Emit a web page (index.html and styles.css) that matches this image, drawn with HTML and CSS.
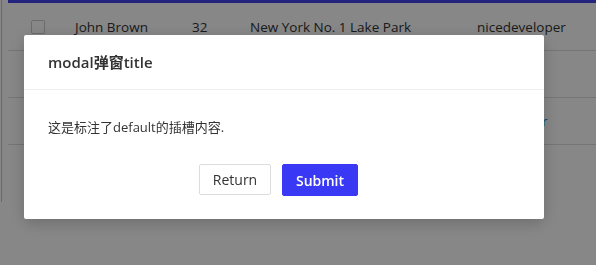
FILE: index.html
```html
<!DOCTYPE html>
<html>

<head>
    <meta charset="UTF-8">
    <title>modal</title>
    <link rel="stylesheet" href="styles.css">
</head>

<body>
    <div class="page">
        <div class="list">
            <div class="row">
                <div class="cell c-check"><span class="checkbox"></span></div>
                <div class="cell c-name">John Brown</div>
                <div class="cell c-age">32</div>
                <div class="cell c-addr">New York No. 1 Lake Park</div>
                <div class="cell c-tag">nicedeveloper</div>
            </div>
            <div class="row">
                <div class="cell c-check"><span class="checkbox"></span></div>
                <div class="cell c-name">Jim Green</div>
                <div class="cell c-age">42</div>
                <div class="cell c-addr">London No. 1 Lake Park</div>
                <div class="cell c-tag">loser</div>
            </div>
            <div class="row">
                <div class="cell c-check"><span class="checkbox"></span></div>
                <div class="cell c-name">Joe Black</div>
                <div class="cell c-age">32</div>
                <div class="cell c-addr">Sidney No. 1 Lake Park</div>
                <div class="cell c-tag"><span class="link">adeveloper</span></div>
            </div>
        </div>
    </div>

    <!--弹窗-->
    <div class="mask">
        <div class="modal">
            <div class="modal-header">modal弹窗title</div>
            <div class="modal-body">这是标注了default的插槽内容.</div>
            <div class="modal-footer">
                <button class="btn btn-return">Return</button>
                <button class="btn btn-submit">Submit</button>
            </div>
        </div>
    </div>
</body>

</html>
```

FILE: styles.css
```css
body {
    margin: 0;
    font-family: "Open Sans", "Noto Sans CJK SC", sans-serif;
    color: #333;
    background-color: #fff;
}

.page {
    margin-left: 1px;
    border-left: 1px solid #c8c8c8;
    height: 202px;
    padding-left: 6px;
}

.list {
    border-top: 3px solid #4444ee;
    font-size: 13.5px;
}

.row {
    display: flex;
    align-items: center;
    height: 46px;
    border-bottom: 1px solid #ddd;
}

.row:first-child {
    height: 47px;
}

.cell {
    box-sizing: border-box;
    padding-left: 16px;
    white-space: nowrap;
}

.c-check {
    width: 51px;
    padding-left: 23px;
}

.c-name {
    width: 117px;
}

.c-age {
    width: 58px;
}

.c-addr {
    width: 227px;
}

.checkbox {
    display: block;
    width: 12px;
    height: 12px;
    border: 1px solid #ccc;
    border-radius: 2px;
}

.link {
    color: #1a7fd6;
}

.mask {
    position: fixed;
    top: 0;
    left: 0;
    right: 0;
    bottom: 0;
    background-color: rgba(0, 0, 0, 0.47);
}

.modal {
    margin: 35px 0 0 24px;
    width: 520px;
    background-color: #fff;
    border-radius: 2px;
    box-shadow: 0 4px 16px rgba(0, 0, 0, 0.2);
}

.modal-header {
    height: 54px;
    line-height: 54px;
    padding: 0 24px;
    font-size: 15px;
    font-weight: 600;
    color: #333;
    border-bottom: 1px solid #eee;
}

.modal-body {
    padding: 28px 24px;
    font-size: 13px;
    line-height: 18px;
}

.modal-footer {
    display: flex;
    justify-content: center;
    gap: 11px;
    padding: 0 11px 23px 0;
}

.btn {
    height: 32px;
    font-family: inherit;
    font-size: 14px;
    border-radius: 2px;
    cursor: pointer;
}

.btn-return {
    width: 72px;
    height: 31px;
    border: 1px solid #ddd;
    background-color: #fff;
    color: #333;
}

.btn-submit {
    width: 76px;
    border: 1px solid #3838f5;
    background-color: #3838f5;
    color: #fff;
    font-weight: 600;
}
```
